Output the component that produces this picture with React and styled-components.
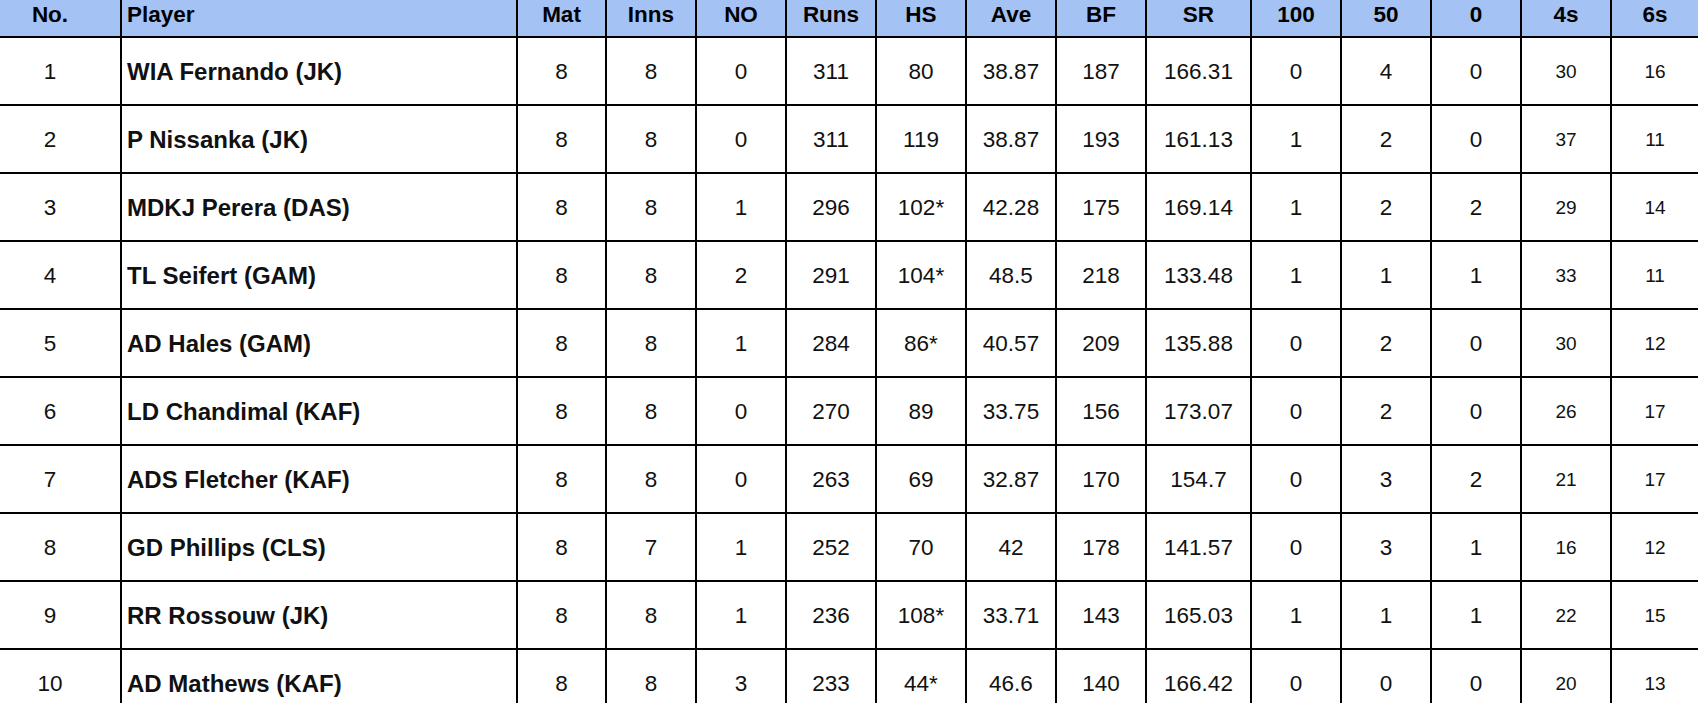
import React from 'react';
import styled, { createGlobalStyle } from 'styled-components';

const GlobalStyle = createGlobalStyle`
  html, body {
    margin: 0;
    padding: 0;
    background: #fff;
    overflow: hidden;
  }
  body {
    font-family: "Liberation Sans", Arial, sans-serif;
    color: #000;
  }
`;

const columns = ['No.', 'Player', 'Mat', 'Inns', 'NO', 'Runs', 'HS', 'Ave', 'BF', 'SR', '100', '50', '0', '4s', '6s'];

const batters = [
  [1, 'WIA Fernando (JK)', 8, 8, 0, 311, '80', 38.87, 187, 166.31, 0, 4, 0, 30, 16],
  [2, 'P Nissanka (JK)', 8, 8, 0, 311, '119', 38.87, 193, 161.13, 1, 2, 0, 37, 11],
  [3, 'MDKJ Perera (DAS)', 8, 8, 1, 296, '102*', 42.28, 175, 169.14, 1, 2, 2, 29, 14],
  [4, 'TL Seifert (GAM)', 8, 8, 2, 291, '104*', 48.5, 218, 133.48, 1, 1, 1, 33, 11],
  [5, 'AD Hales (GAM)', 8, 8, 1, 284, '86*', 40.57, 209, 135.88, 0, 2, 0, 30, 12],
  [6, 'LD Chandimal (KAF)', 8, 8, 0, 270, '89', 33.75, 156, 173.07, 0, 2, 0, 26, 17],
  [7, 'ADS Fletcher (KAF)', 8, 8, 0, 263, '69', 32.87, 170, 154.7, 0, 3, 2, 21, 17],
  [8, 'GD Phillips (CLS)', 8, 7, 1, 252, '70', 42, 178, 141.57, 0, 3, 1, 16, 12],
  [9, 'RR Rossouw (JK)', 8, 8, 1, 236, '108*', 33.71, 143, 165.03, 1, 1, 1, 22, 15],
  [10, 'AD Mathews (KAF)', 8, 8, 3, 233, '44*', 46.6, 140, 166.42, 0, 0, 0, 20, 13],
];

// which kind of cell a column holds
const kindOf = (i) => (i === 0 ? 'rank' : i === 1 ? 'name' : i >= 13 ? 'small' : 'num');

const App = () => {
  return (
    <>
      <GlobalStyle />
      <Table>
        {columns.map((col, i) => (
          <HeadCell key={col} $kind={kindOf(i)}>{col}</HeadCell>
        ))}
        {batters.map((row) =>
          row.map((value, i) => (
            <Cell key={`${row[0]}-${i}`} $kind={kindOf(i)}>
              {value}
            </Cell>
          ))
        )}
      </Table>
    </>
  );
};

export default App;

const Table = styled.div`
  display: grid;
  width: 100%;
  grid-template-columns: 122px 396px 89px 90px 90px 90px 90px 90px 90px 105px 90px 90px 90px 90px 1fr;
  grid-template-rows: 38px;
  grid-auto-rows: 68px;
`;

const HeadCell = styled.div`
  display: flex;
  align-items: center;
  justify-content: ${(p) => (p.$kind === 'name' ? 'flex-start' : 'center')};
  box-sizing: border-box;
  padding: 0 ${(p) => (p.$kind === 'rank' ? '20px' : '0')} 7px ${(p) => (p.$kind === 'name' ? '5px' : '0')};
  background: #a4c2f4;
  border-right: 2px solid #000;
  border-bottom: 2px solid #000;
  font-size: 22.5px;
  font-weight: 700;
  white-space: nowrap;

  &:nth-child(15) {
    border-right: none;
  }
`;

const Cell = styled.div`
  display: flex;
  align-items: center;
  justify-content: ${(p) => (p.$kind === 'name' ? 'flex-start' : 'center')};
  box-sizing: border-box;
  padding: 2px ${(p) => (p.$kind === 'rank' ? '20px' : '0')} 0 ${(p) => (p.$kind === 'name' ? '5px' : '0')};
  background: #fff;
  border-right: 2px solid #000;
  border-bottom: 2px solid #000;
  font-size: ${(p) => (p.$kind === 'name' ? '24px' : p.$kind === 'small' ? '19px' : '22.5px')};
  font-weight: ${(p) => (p.$kind === 'name' ? 700 : 400)};
  color: #111;
  white-space: nowrap;

  &:nth-child(15n) {
    border-right: none;
  }
`;
